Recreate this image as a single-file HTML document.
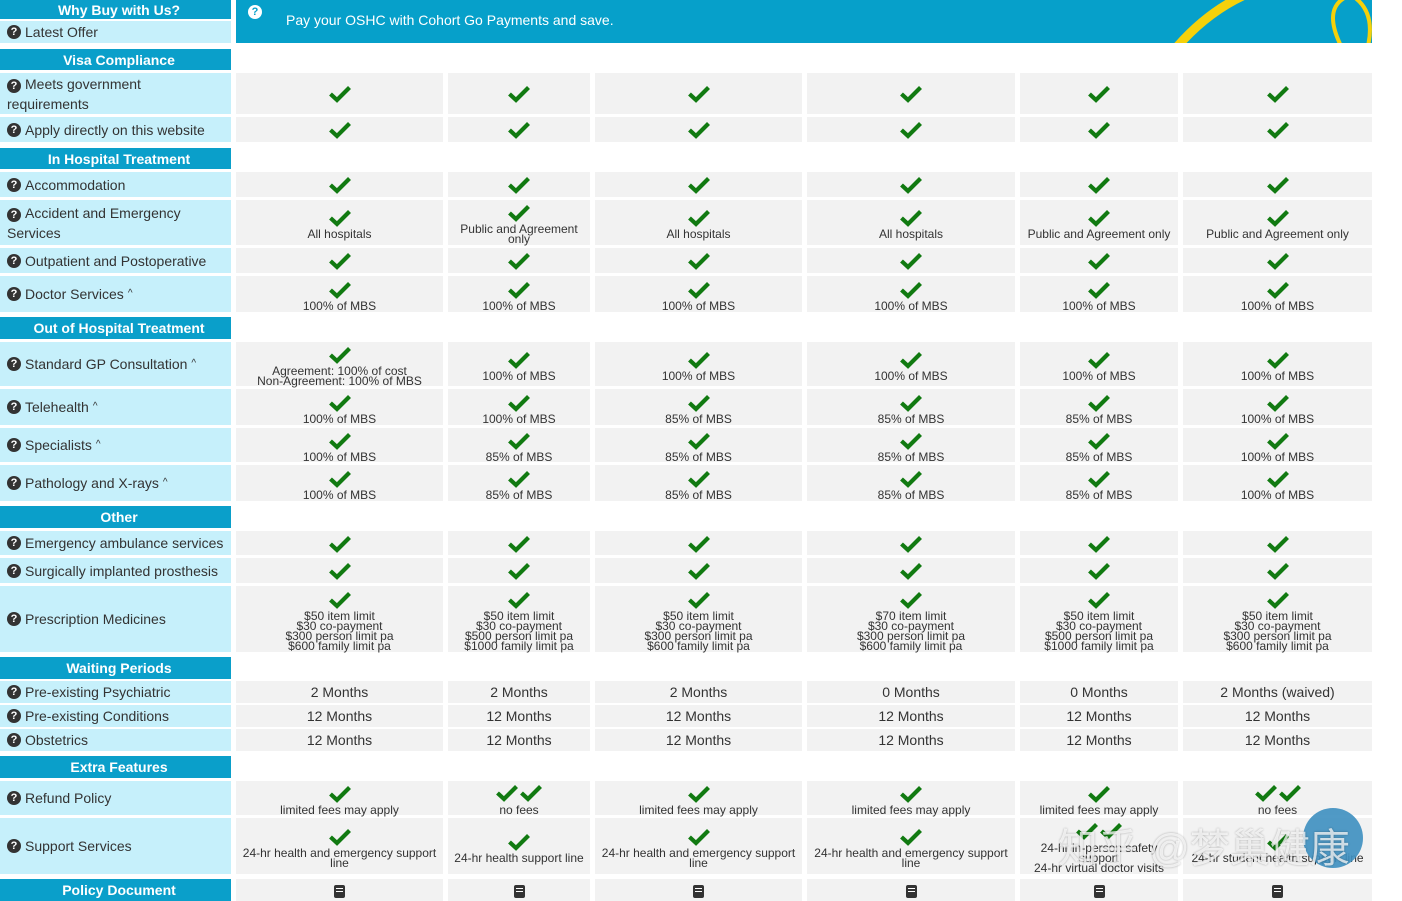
<!DOCTYPE html>
<html><head><meta charset="utf-8"><style>
body{margin:0;width:1402px;height:899px;overflow:hidden;background:#fff;font-family:"Liberation Sans",Arial,sans-serif;color:#333;position:relative}
.r{position:absolute;left:0;display:flex;gap:5px}
.r>div{height:100%;box-sizing:border-box}
.l{width:231px;background:#c6f0fb;font-size:14px;padding:0 7px;display:flex;align-items:center;line-height:20px}
.h{width:231px;background:#0a9fca;color:#fff;font-weight:bold;font-size:14px;text-align:center;display:flex;align-items:center;justify-content:center;padding-left:7px}
.c{background:#f2f2f2;display:flex;flex-direction:column;align-items:center;justify-content:center;font-size:12px;line-height:10px;text-align:center;padding:3px 4px 0}
.m{font-size:14px;line-height:16px;padding-top:0}
.w1{width:207px}.w2{width:142px}.w3{width:207px}.w4{width:208px}.w5{width:158px}.w6{width:189px}
.q{display:inline-block;width:14px;height:14px;border-radius:50%;background:#333;color:#fff;font-size:11px;font-weight:bold;line-height:14px;text-align:center;margin-right:4px;flex:none}
sup{font-size:10px;margin-left:4px}
.k{width:24px;height:18px;flex:none;margin-bottom:2px}
.b{width:11px;height:13px;background:#333;border-radius:2px;position:relative}
.b:after{content:"";position:absolute;left:2px;right:2px;top:3px;height:2px;border-top:1px solid #fff;border-bottom:1px solid #fff}
</style></head><body>
<svg width="0" height="0" style="position:absolute"><defs><symbol id="ck" viewBox="0 0 24 18"><polyline points="2.5,9 9,15 21.5,2.5" fill="none" stroke="#117a11" stroke-width="4.2"/></symbol></defs></svg>

<div style="position:absolute;left:236px;top:0;width:1136px;height:43px;background:#06a0ca;overflow:hidden">
<span style="position:absolute;left:12px;top:5px;width:14px;height:14px;border-radius:50%;background:#fff;color:#06a0ca;font-size:11px;font-weight:bold;text-align:center;line-height:14px">?</span>
<span style="position:absolute;left:50px;top:12px;color:#fff;font-size:14px">Pay your OSHC with Cohort Go Payments and save.</span>
<svg style="position:absolute;left:900px;top:0" width="236" height="43"><path d="M40 48 Q90 -10 160 -20" stroke="#f5d10a" stroke-width="9" fill="none"/><path d="M205 46 Q185 5 215 -5 Q240 10 232 46" stroke="#f5d10a" stroke-width="4" fill="none"/></svg>
</div>

<div class="r" style="top:0;height:19px"><div class="h">Why Buy with Us?</div></div>
<div class="r" style="top:21px;height:22px"><div class="l"><span class="q">?</span>Latest Offer</div></div>

<div class="r" style="top:49px;height:21px"><div class="h">Visa Compliance</div></div>
<div class="r" style="top:73px;height:41px"><div class="l"><span><span class="q">?</span>Meets government requirements</span></div><div class="c w1"><svg class="k"><use href="#ck"/></svg></div><div class="c w2"><svg class="k"><use href="#ck"/></svg></div><div class="c w3"><svg class="k"><use href="#ck"/></svg></div><div class="c w4"><svg class="k"><use href="#ck"/></svg></div><div class="c w5"><svg class="k"><use href="#ck"/></svg></div><div class="c w6"><svg class="k"><use href="#ck"/></svg></div></div>
<div class="r" style="top:117px;height:25px"><div class="l"><span class="q">?</span>Apply directly on this website</div><div class="c w1"><svg class="k"><use href="#ck"/></svg></div><div class="c w2"><svg class="k"><use href="#ck"/></svg></div><div class="c w3"><svg class="k"><use href="#ck"/></svg></div><div class="c w4"><svg class="k"><use href="#ck"/></svg></div><div class="c w5"><svg class="k"><use href="#ck"/></svg></div><div class="c w6"><svg class="k"><use href="#ck"/></svg></div></div>

<div class="r" style="top:148px;height:21px"><div class="h">In Hospital Treatment</div></div>
<div class="r" style="top:172px;height:25px"><div class="l"><span class="q">?</span>Accommodation</div><div class="c w1"><svg class="k"><use href="#ck"/></svg></div><div class="c w2"><svg class="k"><use href="#ck"/></svg></div><div class="c w3"><svg class="k"><use href="#ck"/></svg></div><div class="c w4"><svg class="k"><use href="#ck"/></svg></div><div class="c w5"><svg class="k"><use href="#ck"/></svg></div><div class="c w6"><svg class="k"><use href="#ck"/></svg></div></div>
<div class="r" style="top:200px;height:45px"><div class="l"><span><span class="q">?</span>Accident and Emergency Services</span></div><div class="c w1"><svg class="k"><use href="#ck"/></svg>All hospitals</div><div class="c w2"><svg class="k"><use href="#ck"/></svg>Public and Agreement only</div><div class="c w3"><svg class="k"><use href="#ck"/></svg>All hospitals</div><div class="c w4"><svg class="k"><use href="#ck"/></svg>All hospitals</div><div class="c w5"><svg class="k"><use href="#ck"/></svg>Public and Agreement only</div><div class="c w6"><svg class="k"><use href="#ck"/></svg>Public and Agreement only</div></div>
<div class="r" style="top:248px;height:25px"><div class="l"><span class="q">?</span>Outpatient and Postoperative</div><div class="c w1"><svg class="k"><use href="#ck"/></svg></div><div class="c w2"><svg class="k"><use href="#ck"/></svg></div><div class="c w3"><svg class="k"><use href="#ck"/></svg></div><div class="c w4"><svg class="k"><use href="#ck"/></svg></div><div class="c w5"><svg class="k"><use href="#ck"/></svg></div><div class="c w6"><svg class="k"><use href="#ck"/></svg></div></div>
<div class="r" style="top:276px;height:36px"><div class="l"><span class="q">?</span>Doctor Services<sup>^</sup></div><div class="c w1"><svg class="k"><use href="#ck"/></svg>100% of MBS</div><div class="c w2"><svg class="k"><use href="#ck"/></svg>100% of MBS</div><div class="c w3"><svg class="k"><use href="#ck"/></svg>100% of MBS</div><div class="c w4"><svg class="k"><use href="#ck"/></svg>100% of MBS</div><div class="c w5"><svg class="k"><use href="#ck"/></svg>100% of MBS</div><div class="c w6"><svg class="k"><use href="#ck"/></svg>100% of MBS</div></div>

<div class="r" style="top:317px;height:22px"><div class="h">Out of Hospital Treatment</div></div>
<div class="r" style="top:342px;height:44px"><div class="l"><span class="q">?</span>Standard GP Consultation<sup>^</sup></div><div class="c w1"><svg class="k"><use href="#ck"/></svg>Agreement: 100% of cost<br>Non-Agreement: 100% of MBS</div><div class="c w2"><svg class="k"><use href="#ck"/></svg>100% of MBS</div><div class="c w3"><svg class="k"><use href="#ck"/></svg>100% of MBS</div><div class="c w4"><svg class="k"><use href="#ck"/></svg>100% of MBS</div><div class="c w5"><svg class="k"><use href="#ck"/></svg>100% of MBS</div><div class="c w6"><svg class="k"><use href="#ck"/></svg>100% of MBS</div></div>
<div class="r" style="top:389px;height:36px"><div class="l"><span class="q">?</span>Telehealth<sup>^</sup></div><div class="c w1"><svg class="k"><use href="#ck"/></svg>100% of MBS</div><div class="c w2"><svg class="k"><use href="#ck"/></svg>100% of MBS</div><div class="c w3"><svg class="k"><use href="#ck"/></svg>85% of MBS</div><div class="c w4"><svg class="k"><use href="#ck"/></svg>85% of MBS</div><div class="c w5"><svg class="k"><use href="#ck"/></svg>85% of MBS</div><div class="c w6"><svg class="k"><use href="#ck"/></svg>100% of MBS</div></div>
<div class="r" style="top:428px;height:34px"><div class="l"><span class="q">?</span>Specialists<sup>^</sup></div><div class="c w1"><svg class="k"><use href="#ck"/></svg>100% of MBS</div><div class="c w2"><svg class="k"><use href="#ck"/></svg>85% of MBS</div><div class="c w3"><svg class="k"><use href="#ck"/></svg>85% of MBS</div><div class="c w4"><svg class="k"><use href="#ck"/></svg>85% of MBS</div><div class="c w5"><svg class="k"><use href="#ck"/></svg>85% of MBS</div><div class="c w6"><svg class="k"><use href="#ck"/></svg>100% of MBS</div></div>
<div class="r" style="top:465px;height:36px"><div class="l"><span class="q">?</span>Pathology and X-rays<sup>^</sup></div><div class="c w1"><svg class="k"><use href="#ck"/></svg>100% of MBS</div><div class="c w2"><svg class="k"><use href="#ck"/></svg>85% of MBS</div><div class="c w3"><svg class="k"><use href="#ck"/></svg>85% of MBS</div><div class="c w4"><svg class="k"><use href="#ck"/></svg>85% of MBS</div><div class="c w5"><svg class="k"><use href="#ck"/></svg>85% of MBS</div><div class="c w6"><svg class="k"><use href="#ck"/></svg>100% of MBS</div></div>

<div class="r" style="top:506px;height:22px"><div class="h">Other</div></div>
<div class="r" style="top:531px;height:24px"><div class="l"><span class="q">?</span>Emergency ambulance services</div><div class="c w1"><svg class="k"><use href="#ck"/></svg></div><div class="c w2"><svg class="k"><use href="#ck"/></svg></div><div class="c w3"><svg class="k"><use href="#ck"/></svg></div><div class="c w4"><svg class="k"><use href="#ck"/></svg></div><div class="c w5"><svg class="k"><use href="#ck"/></svg></div><div class="c w6"><svg class="k"><use href="#ck"/></svg></div></div>
<div class="r" style="top:558px;height:25px"><div class="l"><span class="q">?</span>Surgically implanted prosthesis</div><div class="c w1"><svg class="k"><use href="#ck"/></svg></div><div class="c w2"><svg class="k"><use href="#ck"/></svg></div><div class="c w3"><svg class="k"><use href="#ck"/></svg></div><div class="c w4"><svg class="k"><use href="#ck"/></svg></div><div class="c w5"><svg class="k"><use href="#ck"/></svg></div><div class="c w6"><svg class="k"><use href="#ck"/></svg></div></div>
<div class="r" style="top:586px;height:66px"><div class="l"><span class="q">?</span>Prescription Medicines</div><div class="c w1"><svg class="k"><use href="#ck"/></svg>$50 item limit<br>$30 co-payment<br>$300 person limit pa<br>$600 family limit pa</div><div class="c w2"><svg class="k"><use href="#ck"/></svg>$50 item limit<br>$30 co-payment<br>$500 person limit pa<br>$1000 family limit pa</div><div class="c w3"><svg class="k"><use href="#ck"/></svg>$50 item limit<br>$30 co-payment<br>$300 person limit pa<br>$600 family limit pa</div><div class="c w4"><svg class="k"><use href="#ck"/></svg>$70 item limit<br>$30 co-payment<br>$300 person limit pa<br>$600 family limit pa</div><div class="c w5"><svg class="k"><use href="#ck"/></svg>$50 item limit<br>$30 co-payment<br>$500 person limit pa<br>$1000 family limit pa</div><div class="c w6"><svg class="k"><use href="#ck"/></svg>$50 item limit<br>$30 co-payment<br>$300 person limit pa<br>$600 family limit pa</div></div>

<div class="r" style="top:657px;height:22px"><div class="h">Waiting Periods</div></div>
<div class="r" style="top:681px;height:22px"><div class="l"><span class="q">?</span>Pre-existing Psychiatric</div><div class="c m w1">2 Months</div><div class="c m w2">2 Months</div><div class="c m w3">2 Months</div><div class="c m w4">0 Months</div><div class="c m w5">0 Months</div><div class="c m w6">2 Months (waived)</div></div>
<div class="r" style="top:705px;height:22px"><div class="l"><span class="q">?</span>Pre-existing Conditions</div><div class="c m w1">12 Months</div><div class="c m w2">12 Months</div><div class="c m w3">12 Months</div><div class="c m w4">12 Months</div><div class="c m w5">12 Months</div><div class="c m w6">12 Months</div></div>
<div class="r" style="top:729px;height:22px"><div class="l"><span class="q">?</span>Obstetrics</div><div class="c m w1">12 Months</div><div class="c m w2">12 Months</div><div class="c m w3">12 Months</div><div class="c m w4">12 Months</div><div class="c m w5">12 Months</div><div class="c m w6">12 Months</div></div>

<div class="r" style="top:756px;height:22px"><div class="h">Extra Features</div></div>
<div class="r" style="top:781px;height:34px"><div class="l"><span class="q">?</span>Refund Policy</div><div class="c w1"><svg class="k"><use href="#ck"/></svg>limited fees may apply</div><div class="c w2"><span><svg class="k"><use href="#ck"/></svg><svg class="k"><use href="#ck"/></svg></span>no fees</div><div class="c w3"><svg class="k"><use href="#ck"/></svg>limited fees may apply</div><div class="c w4"><svg class="k"><use href="#ck"/></svg>limited fees may apply</div><div class="c w5"><svg class="k"><use href="#ck"/></svg>limited fees may apply</div><div class="c w6"><span><svg class="k"><use href="#ck"/></svg><svg class="k"><use href="#ck"/></svg></span>no fees</div></div>
<div class="r" style="top:818px;height:56px"><div class="l"><span class="q">?</span>Support Services</div><div class="c w1"><svg class="k"><use href="#ck"/></svg>24-hr health and emergency support line</div><div class="c w2"><svg class="k"><use href="#ck"/></svg>24-hr health support line</div><div class="c w3"><svg class="k"><use href="#ck"/></svg>24-hr health and emergency support line</div><div class="c w4"><svg class="k"><use href="#ck"/></svg>24-hr health and emergency support line</div><div class="c w5"><span><svg class="k"><use href="#ck"/></svg><svg class="k"><use href="#ck"/></svg></span>24-hr in-person safety support<br>24-hr virtual doctor visits</div><div class="c w6"><svg class="k"><use href="#ck"/></svg>24-hr student health support line</div></div>

<div class="r" style="top:879px;height:22px"><div class="h">Policy Document</div><div class="c w1"><div class="b"></div></div><div class="c w2"><div class="b"></div></div><div class="c w3"><div class="b"></div></div><div class="c w4"><div class="b"></div></div><div class="c w5"><div class="b"></div></div><div class="c w6"><div class="b"></div></div></div>

<div style="position:absolute;left:1303px;top:808px;width:60px;height:60px;border-radius:50%;background:#3d8fc0;opacity:.9"></div>
<div style="position:absolute;left:1058px;top:816px;font-size:40px;color:rgba(255,255,255,.75);font-family:'Liberation Sans','Noto Sans CJK SC',sans-serif;text-shadow:0 0 2px rgba(0,0,0,.3)">知乎 @梦巢健康</div>
</body></html>
